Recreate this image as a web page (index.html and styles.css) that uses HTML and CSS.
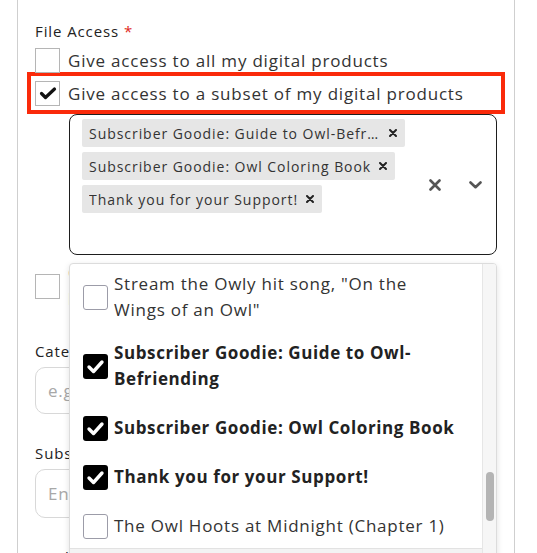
FILE: index.html
```html
<!DOCTYPE html>
<html lang="en">
<head>
<meta charset="utf-8">
<title>File Access</title>
<link rel="stylesheet" href="styles.css">
</head>
<body>
<div class="panel">
  <div class="field first">
    <div class="label">File Access <span class="req">*</span></div>
    <div class="check-row">
      <span class="box"></span>
      <span class="check-text">Give access to all my digital products</span>
    </div>
    <div class="check-row highlight">
      <span class="box">
        <svg width="25" height="25" viewBox="0 0 25 25"><polyline points="6.5,12.5 10.5,16.5 19.5,8" fill="none" stroke="#111" stroke-width="3.2" stroke-linecap="round" stroke-linejoin="round"/></svg>
      </span>
      <span class="check-text">Give access to a subset of my digital products</span>
    </div>
    <div class="select">
      <div class="values">
        <div class="chip"><span class="chip-label">Subscriber Goodie: Guide to Owl-Befriending</span><span class="chip-x"><svg width="8" height="8" viewBox="0 0 8 8"><path d="M1 1L7 7M7 1L1 7" stroke="#222" stroke-width="2" stroke-linecap="round"/></svg></span></div>
        <div class="chip"><span class="chip-label">Subscriber Goodie: Owl Coloring Book</span><span class="chip-x"><svg width="8" height="8" viewBox="0 0 8 8"><path d="M1 1L7 7M7 1L1 7" stroke="#222" stroke-width="2" stroke-linecap="round"/></svg></span></div>
        <div class="chip"><span class="chip-label">Thank you for your Support!</span><span class="chip-x"><svg width="8" height="8" viewBox="0 0 8 8"><path d="M1 1L7 7M7 1L1 7" stroke="#222" stroke-width="2" stroke-linecap="round"/></svg></span></div>
        <div class="input-line"></div>
      </div>
      <div class="controls">
        <span class="ctrl"><svg width="12" height="12" viewBox="0 0 12 12"><path d="M1.5 1.5L10.5 10.5M10.5 1.5L1.5 10.5" stroke="#555" stroke-width="2.6" stroke-linecap="round"/></svg></span>
        <span class="ctrl"><svg width="13" height="8" viewBox="0 0 13 8"><polyline points="1.5,1.5 6.5,6.2 11.5,1.5" fill="none" stroke="#555" stroke-width="2.6" stroke-linecap="round" stroke-linejoin="round"/></svg></span>
      </div>
    </div>
    <div class="check-row two">
      <span class="box"></span>
      <span class="check-text">Customize<br>levels</span>
    </div>
  </div>
  <div class="field">
    <div class="label">Category</div>
    <div class="input">e.g. Newsletter</div>
  </div>
  <div class="field">
    <div class="label">Subscription Price</div>
    <div class="input tall">Enter a price</div>
  </div>
  <div class="field">
    <div class="label">Trial Period</div>
  </div>

  <div class="menu">
    <div class="list">
      <div class="opt first-opt">
        <span class="obox"></span>
        <span class="otext">Stream the Owly hit song, "On the<br>Wings of an Owl"</span>
      </div>
      <div class="opt checked">
        <span class="obox on"><svg width="25" height="25" viewBox="0 0 25 25"><polyline points="6,13 10.5,17.5 19,8" fill="none" stroke="#fff" stroke-width="3.4" stroke-linecap="round" stroke-linejoin="round"/></svg></span>
        <span class="otext">Subscriber Goodie: Guide to Owl-<br>Befriending</span>
      </div>
      <div class="opt checked">
        <span class="obox on"><svg width="25" height="25" viewBox="0 0 25 25"><polyline points="6,13 10.5,17.5 19,8" fill="none" stroke="#fff" stroke-width="3.4" stroke-linecap="round" stroke-linejoin="round"/></svg></span>
        <span class="otext">Subscriber Goodie: Owl Coloring Book</span>
      </div>
      <div class="opt checked">
        <span class="obox on"><svg width="25" height="25" viewBox="0 0 25 25"><polyline points="6,13 10.5,17.5 19,8" fill="none" stroke="#fff" stroke-width="3.4" stroke-linecap="round" stroke-linejoin="round"/></svg></span>
        <span class="otext">Thank you for your Support!</span>
      </div>
      <div class="opt">
        <span class="obox"></span>
        <span class="otext">The Owl Hoots at Midnight (Chapter 1)</span>
      </div>
      <div class="menu-foot"></div>
    </div>
    <div class="track"><div class="thumb"></div></div>
  </div>
</div>
</body>
</html>
```

FILE: styles.css
```css
html, body {
  margin: 0;
  padding: 0;
  height: 553px;
  overflow: hidden;
  background: #fff;
}
body {
  font-family: "Open Sans", "Noto Sans", sans-serif;
  color: #333;
}
.panel {
  position: relative;
  margin-left: 17px;
  width: 462px;
  height: 553px;
  border-left: 1px solid #cfcfcf;
  border-right: 1px solid #cfcfcf;
  padding: 21px 17px 0 17px;
  box-sizing: content-box;
  overflow: hidden;
}
.field { margin-top: 29px; }
.field.first { margin-top: 0; }
.label {
  font-size: 15px;
  line-height: 20px;
  letter-spacing: 0.9px;
  color: #222;
  margin-bottom: 6px;
}
.field.first .label { margin-bottom: 7px; }
.req { color: #e0261b; }
.check-row {
  display: flex;
  align-items: center;
  gap: 8px;
}
.box {
  width: 23px;
  height: 23px;
  border: 1px solid #b5b5b5;
  flex: none;
  display: flex;
  align-items: center;
  justify-content: center;
  background: #fff;
}
.box svg { flex: none; }
.check-text {
  font-size: 17px;
  line-height: 25px;
  letter-spacing: 0.8px;
  color: #333;
}
.highlight {
  margin: -1px -8px 0 -8px;
  border: 4px solid #fa2a0a;
  padding: 5px 4px 4px 4px;
}
.select {
  margin-left: 34px;
  border: 1px solid #1e1e1e;
  border-radius: 8px;
  display: flex;
  height: 139px;
}
.values {
  flex: 1;
  min-width: 0;
  padding: 4px 10px 4px 12px;
  display: flex;
  flex-direction: column;
  align-items: flex-start;
  gap: 5px;
}
.chip {
  display: flex;
  align-items: center;
  background: #e6e6e6;
  height: 28px;
  padding: 0 8px 0 7px;
  max-width: 100%;
  box-sizing: border-box;
  border-radius: 2px;
}
.chip-label {
  font-size: 14px;
  letter-spacing: 0.95px;
  color: #333;
  white-space: nowrap;
  overflow: hidden;
  text-overflow: ellipsis;
  min-width: 0;
}
.chip-x {
  margin-left: 8px;
  display: flex;
  flex: none;
}
.input-line { height: 32px; }
.controls {
  display: flex;
  align-items: center;
  width: 81px;
  flex: none;
}
.ctrl {
  width: 40px;
  display: flex;
  justify-content: center;
  align-items: center;
}
.check-row.two {
  margin-top: 5px;
}
.check-row.two .check-text { line-height: 26px; }
.input {
  height: 45px;
  border: 1px solid #d8d8d8;
  border-radius: 10px;
  font-size: 17px;
  letter-spacing: 0.8px;
  color: #a8a8a8;
  display: flex;
  align-items: center;
  padding-left: 12px;
}
.input.tall { height: 47px; }

.menu {
  position: absolute;
  left: 51px;
  top: 263px;
  width: 426px;
  height: 320px;
  border: 1px solid #dcdcdc;
  border-radius: 4px;
  background: #fff;
  box-shadow: 0 2px 6px rgba(0,0,0,0.12);
  display: flex;
  overflow: hidden;
}
.list {
  flex: 1;
  padding: 7px 0 0 13px;
  display: flex;
  flex-direction: column;
  gap: 23px;
}
.opt {
  display: flex;
  align-items: center;
  gap: 6px;
}
.opt.first-opt { margin-bottom: -6px; }
.obox {
  width: 23px;
  height: 23px;
  border: 1px solid #9c9ca8;
  border-radius: 3px;
  flex: none;
  display: flex;
  align-items: center;
  justify-content: center;
}
.obox.on {
  width: 25px;
  height: 25px;
  border: none;
  background: #000;
}
.otext {
  font-size: 17px;
  line-height: 26px;
  letter-spacing: 0.75px;
  color: #333;
  white-space: nowrap;
}
.checked .otext {
  font-weight: 700;
  letter-spacing: 0.6px;
  color: #222;
}
.menu-foot {
  margin: -14px 0 0 -13px;
  height: 40px;
  background: #f3f3f3;
  border-top: 1px solid #e2e2e2;
}
.track {
  width: 14px;
  flex: none;
  background: #f6f6f6;
  border-left: 1px solid #e6e6e6;
  padding-left: 3px;
  box-sizing: border-box;
}
.thumb {
  margin-top: 208px;
  width: 8px;
  height: 49px;
  border-radius: 4px;
  background: #b4b4b4;
}
```
